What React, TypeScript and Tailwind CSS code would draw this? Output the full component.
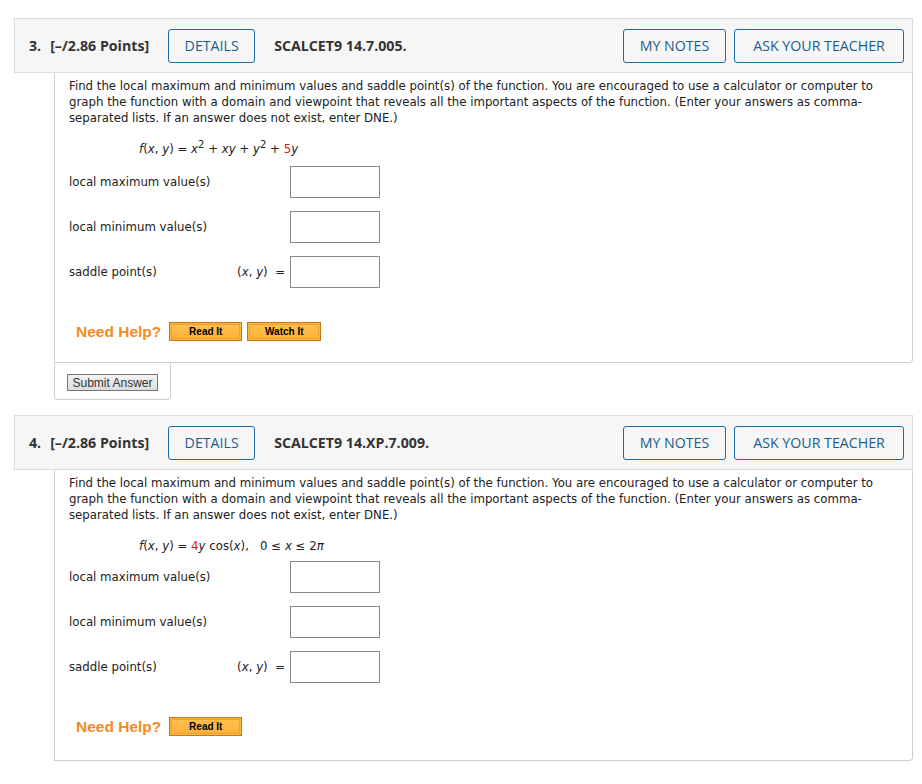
import React from "react";

const hdrFont = { fontFamily: '"Open Sans", "Liberation Sans", sans-serif' };
const bodyFont = { fontFamily: '"DejaVu Sans", Verdana, sans-serif' };
const arial = { fontFamily: '"Liberation Sans", Arial, sans-serif' };

function Header({ num, code }: { num: string; code: string }) {
  return (
    <div
      className="h-[55px] border border-[#dcdcdc] bg-[#f6f6f6] flex items-center pl-[14px] pr-[8px] text-[14.2px] text-[#333]"
      style={hdrFont}
    >
      <span className="font-bold">{num}</span>
      <span className="ml-[9px] font-bold">[–/2.86 Points]</span>
      <button className="ml-[19px] h-[34px] w-[87px] rounded-[3px] border border-[#1a6aa3] text-[#1b5d8f] text-[14.2px] font-medium bg-transparent">
        DETAILS
      </button>
      <span className="ml-[19px] font-bold">{code}</span>
      <div className="ml-auto flex gap-[8px]">
        <button className="h-[34px] w-[103px] rounded-[3px] border border-[#1a6aa3] text-[#1b5d8f] text-[14.2px] font-medium">
          MY NOTES
        </button>
        <button className="h-[34px] w-[170px] rounded-[3px] border border-[#1a6aa3] text-[#1b5d8f] text-[14.2px] font-medium">
          ASK YOUR TEACHER
        </button>
      </div>
    </div>
  );
}

function Row({ label, xy }: { label: string; xy?: boolean }) {
  return (
    <div className="flex items-center h-[31px]">
      <div className="w-[221px] flex items-center pr-[5px] pt-[2px]">
        <span>{label}</span>
        {xy && (
          <span className="ml-auto">
            (<i>x</i>, <i>y</i>) &nbsp;=
          </span>
        )}
      </div>
      <div className="w-[90px] h-[32px] border border-[#8a8a8a] bg-white" />
    </div>
  );
}

function HelpBtn({ children, w }: { children: React.ReactNode; w: string }) {
  return (
    <div
      className={`${w} h-[19px] border border-[#c2771f] bg-[#fdb740] p-[1px]`}
      style={arial}
    >
      <div className="h-full border border-[#f0a030] bg-gradient-to-b from-[#ffc04d] to-[#fbb23a] flex items-center justify-center text-[10px] font-bold text-black leading-none">
        {children}
      </div>
    </div>
  );
}

const Intro = () => (
  <p className="leading-[16px]">
    Find the local maximum and minimum values and saddle point(s) of the function. You are encouraged to use a calculator or computer to graph the function with a domain and viewpoint that reveals all the important aspects of the function. (Enter your answers as comma-separated lists. If an answer does not exist, enter DNE.)
  </p>
);

export default function App() {
  return (
    <div className="bg-white w-[922px] min-h-[784px] pt-[18px] text-[#222]">
      {/* Question 3 */}
      <div className="ml-[14px] w-[899px]">
        <Header num="3." code="SCALCET9 14.7.005." />
        <div
          className="ml-[40px] border-l border-r border-b border-[#cfcfcf] rounded-br-[4px] pl-[14px] pr-[8px] pt-[5px] h-[290px] text-[11.75px]"
          style={bodyFont}
        >
          <Intro />
          <div className="ml-[70px] mt-[15px] h-[16px] leading-[16px]">
            <i>f</i>(<i>x</i>, <i>y</i>) = <i>x</i>
            <sup className="text-[10px]">2</sup> + <i>xy</i> + <i>y</i>
            <sup className="text-[10px]">2</sup> + <span className="text-[#ee1111]">5</span>
            <i>y</i>
          </div>
          <div className="mt-[9px] flex flex-col gap-[14px]">
            <Row label="local maximum value(s)" />
            <Row label="local minimum value(s)" />
            <Row label="saddle point(s)" xy />
          </div>
          <div className="mt-[33px] ml-[7px] flex items-center">
            <span className="text-[#f68a1f] text-[15.5px] font-bold mr-[8px]" style={arial}>
              Need Help?
            </span>
            <HelpBtn w="w-[73px]">Read It</HelpBtn>
            <div className="w-[5px]" />
            <HelpBtn w="w-[74px]">Watch It</HelpBtn>
          </div>
        </div>
        <div className="ml-[40px] w-[117px] h-[37px] border-l border-r border-b border-[#cfcfcf] rounded-b-[4px] pl-[12px] pt-[11px]">
          <button
            className="block h-[17px] w-[91px] border border-[#767676] bg-gradient-to-b from-[#f3f3f3] to-[#dcdcdc] text-[12px] text-[#333] leading-none"
            style={arial}
          >
            Submit Answer
          </button>
        </div>
      </div>

      {/* Question 4 */}
      <div className="ml-[14px] w-[899px] mt-[15px]">
        <Header num="4." code="SCALCET9 14.XP.7.009." />
        <div
          className="ml-[40px] border-l border-r border-b border-[#cfcfcf] rounded-br-[4px] pl-[14px] pr-[8px] pt-[5px] h-[291px] text-[11.75px]"
          style={bodyFont}
        >
          <Intro />
          <div className="ml-[70px] mt-[15px] h-[16px] leading-[16px]">
            <i>f</i>(<i>x</i>, <i>y</i>) = <span className="text-[#ee1111]">4</span>
            <i>y</i> cos(<i>x</i>), &nbsp; 0 ≤ <i>x</i> ≤ 2<i>π</i>
          </div>
          <div className="mt-[7px] flex flex-col gap-[14px]">
            <Row label="local maximum value(s)" />
            <Row label="local minimum value(s)" />
            <Row label="saddle point(s)" xy />
          </div>
          <div className="mt-[33px] ml-[7px] flex items-center">
            <span className="text-[#f68a1f] text-[15.5px] font-bold mr-[8px]" style={arial}>
              Need Help?
            </span>
            <HelpBtn w="w-[73px]">Read It</HelpBtn>
          </div>
        </div>
      </div>
    </div>
  );
}
